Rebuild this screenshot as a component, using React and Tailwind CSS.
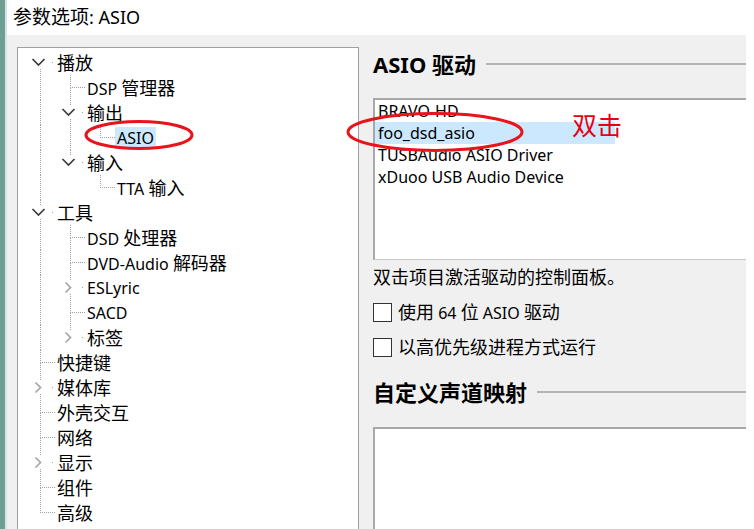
import React from "react";

const CJK = /([\u2E80-\u9FFF\u3000-\u303F\uFF00-\uFFEF]+)/;

// Latin and CJK runs get different sizes, like the Windows UI font fallback
function Txt({ text, latin = "text-[16px]", cjk = "text-[18px]" }) {
  return (
    <span className="whitespace-pre">
      {text
        .split(CJK)
        .filter(Boolean)
        .map((part, i) => (
          <span key={i} className={CJK.test(part) ? cjk : latin}>
            {part}
          </span>
        ))}
    </span>
  );
}

const tree = [
  {
    label: "播放",
    open: true,
    children: [
      { label: "DSP 管理器" },
      { label: "输出", open: true, children: [{ label: "ASIO", selected: true }] },
      { label: "输入", open: true, children: [{ label: "TTA 输入" }] },
    ],
  },
  {
    label: "工具",
    open: true,
    children: [
      { label: "DSD 处理器" },
      { label: "DVD-Audio 解码器" },
      { label: "ESLyric", closed: true },
      { label: "SACD" },
      { label: "标签", closed: true },
    ],
  },
  { label: "快捷键" },
  { label: "媒体库", closed: true },
  { label: "外壳交互" },
  { label: "网络" },
  { label: "显示", closed: true },
  { label: "组件" },
  { label: "高级" },
];

function flatten(nodes, depth = 0, rails = []) {
  const rows = [];
  nodes.forEach((node, i) => {
    const last = i === nodes.length - 1;
    rows.push({ ...node, depth, rails, last, first: depth === 0 && i === 0 });
    if (node.children) rows.push(...flatten(node.children, depth + 1, [...rails, !last]));
  });
  return rows;
}

const LINE = "#a0a0a0";

function Rail() {
  return (
    <svg width="30" height="25" className="shrink-0" shapeRendering="crispEdges">
      <line x1="15.5" y1="0" x2="15.5" y2="25" stroke={LINE} strokeDasharray="1 1" />
    </svg>
  );
}

function NodeCell({ row }) {
  const hasBtn = row.open || row.closed;
  return (
    <svg width="30" height="25" className="shrink-0">
      <g shapeRendering="crispEdges" stroke={LINE} strokeDasharray="1 1">
        {!row.first && <line x1="15.5" y1="0" x2="15.5" y2={hasBtn ? 6 : 12.5} />}
        {!row.last && <line x1="15.5" y1={hasBtn ? 19 : 12.5} x2="15.5" y2="25" />}
        {!hasBtn && <line x1="15" y1="12.5" x2="30" y2="12.5" />}
      </g>
      {hasBtn && <rect x="27" y="12" width="1" height="1" fill={LINE} />}
      {row.open && (
        <polyline points="7.5,9 13.5,15 19.5,9" fill="none" stroke="#3c3c3c" strokeWidth="1.7" />
      )}
      {row.closed && (
        <polyline points="10.5,7.5 15.5,12.5 10.5,17.5" fill="none" stroke="#a6a6a6" strokeWidth="1.7" />
      )}
    </svg>
  );
}

function TreeRow({ row }) {
  return (
    <div className="flex h-[25px] items-center">
      {row.rails.map((on, i) => (on ? <Rail key={i} /> : <div key={i} className="w-[30px] shrink-0" />))}
      <NodeCell row={row} />
      <div
        className={
          "flex h-[22px] items-center whitespace-nowrap px-[2px] leading-none " +
          (row.selected ? "bg-[#cce8ff]" : "")
        }
      >
        <Txt text={row.label} />
      </div>
    </div>
  );
}

function GroupTitle({ text }) {
  return (
    <div className="flex h-[30px] shrink-0 items-center gap-[10px]">
      <div className="whitespace-nowrap text-[22px] font-bold leading-none">{text}</div>
      <div className="h-[2px] flex-1 bg-[#b4b4b4]" />
    </div>
  );
}

function Check({ label }) {
  return (
    <div className="flex h-[24px] shrink-0 items-center gap-[6px]">
      <div className="h-[19px] w-[19px] border border-[#333] bg-white" />
      <div className="whitespace-nowrap leading-none">
        <Txt text={label} />
      </div>
    </div>
  );
}

const drivers = ["BRAVO-HD", "foo_dsd_asio", "TUSBAudio ASIO Driver", "xDuoo USB Audio Device"];

export default function App() {
  const rows = flatten(tree);

  return (
    <div className="relative flex h-[529px] w-[754px] overflow-hidden bg-white font-['Noto_Sans','Noto_Sans_CJK_SC',sans-serif] text-black">
      <div className="w-[5px] shrink-0 bg-[#6f9f93]" />
      <div className="w-[2px] shrink-0 bg-[#d6e3ea]" />

      <div className="flex w-[739px] shrink-0 flex-col">
        <div className="flex h-[35px] shrink-0 items-center pl-[6px] leading-none">
          <Txt text="参数选项: ASIO" latin="text-[18px]" cjk="text-[19px]" />
        </div>

        <div className="flex min-h-0 flex-1 overflow-hidden bg-[#f0f0f0] pl-[10px] pt-[12px]">
          <div className="w-[342px] shrink-0 border border-b-0 border-[#a0a0a0] bg-white pl-[7px] pt-[2px]">
            {rows.map((row, i) => (
              <TreeRow key={i} row={row} />
            ))}
          </div>

          <div className="flex flex-1 flex-col pl-[14px] pt-[2px]">
            <GroupTitle text="ASIO 驱动" />

            <div className="mt-[19px] h-[162px] shrink-0 border-b border-l-2 border-t-2 border-[#a8a8a8] border-b-[#c8c8c8] bg-white">
              {drivers.map((d) => (
                <div
                  key={d}
                  className={
                    "flex h-[22px] w-[240px] items-center pl-[3px] text-[16px] leading-none " +
                    (d === "foo_dsd_asio" ? "bg-[#cce8ff]" : "")
                  }
                >
                  {d}
                </div>
              ))}
            </div>

            <div className="mt-[6px] flex h-[22px] shrink-0 items-center whitespace-nowrap leading-none">
              <Txt text="双击项目激活驱动的控制面板。" />
            </div>

            <div className="mt-[12px] shrink-0">
              <Check label="使用 64 位 ASIO 驱动" />
            </div>
            <div className="mt-[11px] shrink-0">
              <Check label="以高优先级进程方式运行" />
            </div>

            <div className="mt-[18px] shrink-0">
              <GroupTitle text="自定义声道映射" />
            </div>

            <div className="mt-[20px] h-[200px] shrink-0 border-l-2 border-t-2 border-[#a8a8a8] bg-white" />
          </div>
        </div>
      </div>

      {/* red annotations */}
      <svg className="absolute left-[84px] top-[119px]" width="110" height="32">
        <ellipse cx="55" cy="16" rx="53" ry="13.5" fill="none" stroke="#e8141b" strokeWidth="3" />
      </svg>
      <svg className="absolute left-[345px] top-[111px]" width="180" height="42">
        <ellipse cx="90" cy="21" rx="87" ry="18.5" fill="none" stroke="#e8141b" strokeWidth="3" />
      </svg>
      <div className="absolute left-[572px] top-[113px] text-[25px] leading-none text-[#e60012]">双击</div>
    </div>
  );
}
